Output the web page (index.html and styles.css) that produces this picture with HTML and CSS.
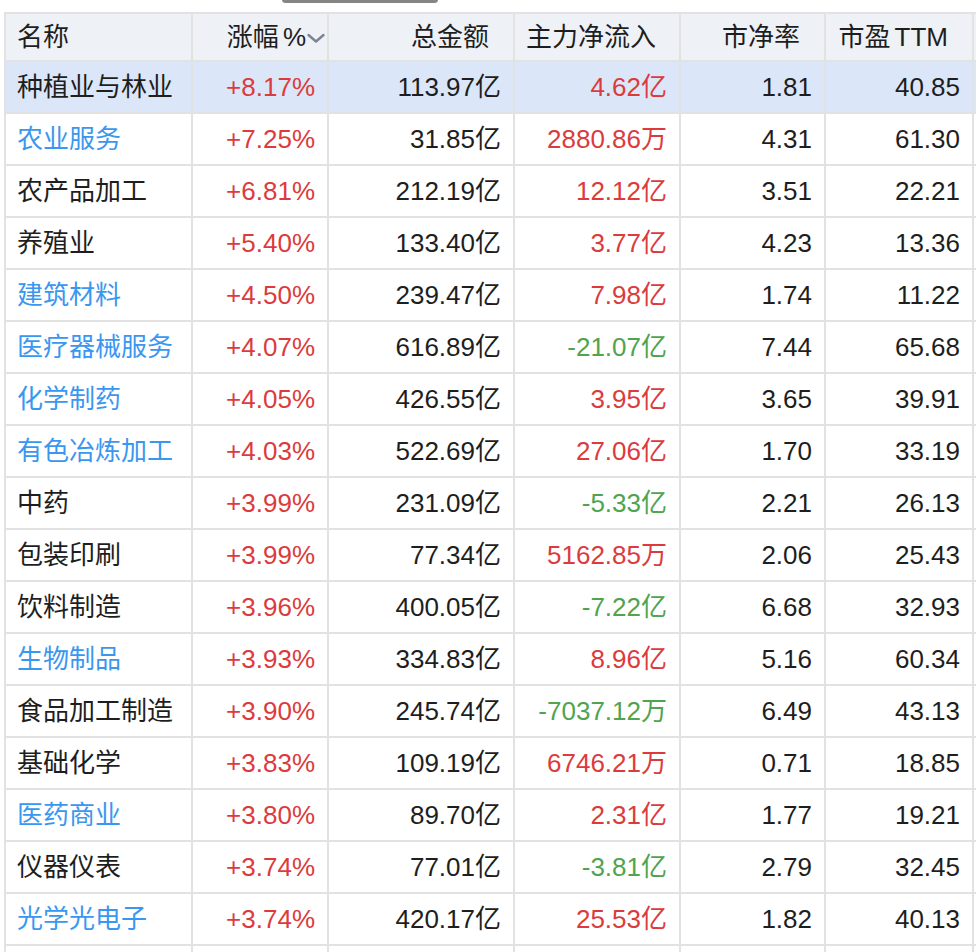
FILE: index.html
```html
<!DOCTYPE html>
<html lang="zh-CN">
<head>
<meta charset="utf-8">
<title>行业板块</title>
<link rel="stylesheet" href="styles.css">
</head>
<body>
<div class="page">
  <div class="scroll-thumb"></div>
  <table class="board">
    <colgroup>
      <col class="c-name"><col class="c-chg"><col class="c-amt"><col class="c-flow"><col class="c-pb"><col class="c-pe"><col class="c-more">
    </colgroup>
    <thead>
      <tr class="head">
        <th class="left">名称</th>
        <th class="sorted">涨幅<span class="gap"></span>%<svg class="chev" width="20" height="12" viewBox="0 0 20 12"><path d="M2.5 3 L10 9.5 L17.5 3" fill="none" stroke="#7c8393" stroke-width="2.4" stroke-linecap="round" stroke-linejoin="round"/></svg></th>
        <th>总金额</th>
        <th>主力净流入</th>
        <th>市净率</th>
        <th>市盈<span class="gap"></span>TTM</th>
        <th></th>
      </tr>
    </thead>
    <tbody>
      <tr class="selected"><td class="left">种植业与林业</td><td class="up">+8.17%</td><td>113.97亿</td><td class="up">4.62亿</td><td>1.81</td><td>40.85</td><td></td></tr>
      <tr><td class="left link">农业服务</td><td class="up">+7.25%</td><td>31.85亿</td><td class="up">2880.86万</td><td>4.31</td><td>61.30</td><td></td></tr>
      <tr><td class="left">农产品加工</td><td class="up">+6.81%</td><td>212.19亿</td><td class="up">12.12亿</td><td>3.51</td><td>22.21</td><td></td></tr>
      <tr><td class="left">养殖业</td><td class="up">+5.40%</td><td>133.40亿</td><td class="up">3.77亿</td><td>4.23</td><td>13.36</td><td></td></tr>
      <tr><td class="left link">建筑材料</td><td class="up">+4.50%</td><td>239.47亿</td><td class="up">7.98亿</td><td>1.74</td><td>11.22</td><td></td></tr>
      <tr><td class="left link">医疗器械服务</td><td class="up">+4.07%</td><td>616.89亿</td><td class="down">-21.07亿</td><td>7.44</td><td>65.68</td><td></td></tr>
      <tr><td class="left link">化学制药</td><td class="up">+4.05%</td><td>426.55亿</td><td class="up">3.95亿</td><td>3.65</td><td>39.91</td><td></td></tr>
      <tr><td class="left link">有色冶炼加工</td><td class="up">+4.03%</td><td>522.69亿</td><td class="up">27.06亿</td><td>1.70</td><td>33.19</td><td></td></tr>
      <tr><td class="left">中药</td><td class="up">+3.99%</td><td>231.09亿</td><td class="down">-5.33亿</td><td>2.21</td><td>26.13</td><td></td></tr>
      <tr><td class="left">包装印刷</td><td class="up">+3.99%</td><td>77.34亿</td><td class="up">5162.85万</td><td>2.06</td><td>25.43</td><td></td></tr>
      <tr><td class="left">饮料制造</td><td class="up">+3.96%</td><td>400.05亿</td><td class="down">-7.22亿</td><td>6.68</td><td>32.93</td><td></td></tr>
      <tr><td class="left link">生物制品</td><td class="up">+3.93%</td><td>334.83亿</td><td class="up">8.96亿</td><td>5.16</td><td>60.34</td><td></td></tr>
      <tr><td class="left">食品加工制造</td><td class="up">+3.90%</td><td>245.74亿</td><td class="down">-7037.12万</td><td>6.49</td><td>43.13</td><td></td></tr>
      <tr><td class="left">基础化学</td><td class="up">+3.83%</td><td>109.19亿</td><td class="up">6746.21万</td><td>0.71</td><td>18.85</td><td></td></tr>
      <tr><td class="left link">医药商业</td><td class="up">+3.80%</td><td>89.70亿</td><td class="up">2.31亿</td><td>1.77</td><td>19.21</td><td></td></tr>
      <tr><td class="left">仪器仪表</td><td class="up">+3.74%</td><td>77.01亿</td><td class="down">-3.81亿</td><td>2.79</td><td>32.45</td><td></td></tr>
      <tr><td class="left link">光学光电子</td><td class="up">+3.74%</td><td>420.17亿</td><td class="up">25.53亿</td><td>1.82</td><td>40.13</td><td></td></tr>
      <tr><td class="left"></td><td></td><td></td><td></td><td></td><td></td><td></td></tr>
    </tbody>
  </table>
</div>
</body>
</html>
```

FILE: styles.css
```css
html, body {
  margin: 0;
  padding: 0;
  background: #ffffff;
  overflow: hidden;
}

.page {
  position: relative;
  width: 976px;
  height: 952px;
  overflow: hidden;
  padding-top: 12px;
  padding-left: 4px;
  box-sizing: border-box;
}

.scroll-thumb {
  position: absolute;
  top: -4px;
  left: 282px;
  width: 156px;
  height: 7px;
  border-radius: 4px;
  background: #858585;
}

.board {
  table-layout: fixed;
  border-collapse: separate;
  border-spacing: 0;
  width: 1070px;
  font-family: "Liberation Sans", "Noto Sans CJK SC", sans-serif;
  font-size: 26px;
  color: #1e1e1e;
}

.c-name { width: 189px; }
.c-chg { width: 136px; }
.c-amt { width: 186px; }
.c-flow { width: 166px; }
.c-pb { width: 145px; }
.c-pe { width: 148px; }
.c-more { width: 100px; }

.board th,
.board td {
  box-sizing: border-box;
  border-right: 2px solid #e2e2e2;
  border-bottom: 2px solid #e2e2e2;
  text-align: right;
  vertical-align: middle;
  white-space: nowrap;
  padding: 0 12px 0 11px;
  line-height: 30px;
}

.board th:first-child,
.board td:first-child {
  border-left: 2px solid #e2e2e2;
}

.board th {
  font-weight: normal;
  background: #eef1f6;
  border-top: 2px solid #e2e2e2;
  padding-right: 24px;
}

.head { height: 50px; }
.board tbody tr { height: 52px; }

.board .left {
  text-align: left;
}

.gap {
  display: inline-block;
  width: 4px;
}

.selected td {
  background: #dbe7f8;
}

.up { color: #dc3b3d; }
.down { color: #4fa44f; }
.link { color: #3a97f0; }

.board th.sorted {
  padding-right: 22px;
}

.chev {
  display: inline-block;
  vertical-align: middle;
  margin-left: 0;
  margin-right: -21px;
  margin-top: -2px;
}
```
